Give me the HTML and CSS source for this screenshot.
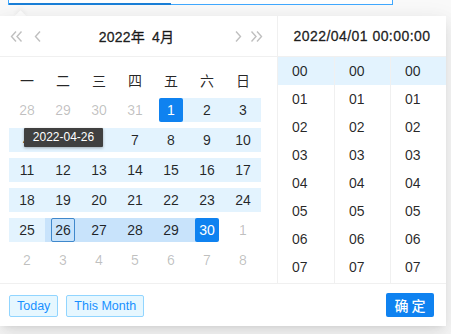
FILE: index.html
```html
<!DOCTYPE html>
<html lang="zh">
<head>
<meta charset="utf-8">
<title>Date picker</title>
<link rel="stylesheet" href="styles.css">
</head>
<body>
<div class="input-bar"><span class="active-bar"></span></div>
<div class="dropdown">
  <span class="arrow"></span>
  <div class="panel">
    <div class="panel-main">
      <div class="date-panel">
        <div class="date-header">
          <div class="nav nav-left">
            <svg class="dbl" width="13" height="13" viewBox="0 0 13 13"><polyline points="6,1.5 1.5,6.5 6,11.5"/><polyline points="11.5,1.5 7,6.5 11.5,11.5"/></svg>
            <svg class="sgl" width="7" height="13" viewBox="0 0 7 13"><polyline points="6,1.5 1.5,6.5 6,11.5"/></svg>
          </div>
          <div class="title"><span class="year">2022年</span><span>4月</span></div>
          <div class="nav nav-right">
            <svg class="sgl" width="7" height="13" viewBox="0 0 7 13"><polyline points="1,1.5 5.5,6.5 1,11.5"/></svg>
            <svg class="dbl" width="13" height="13" viewBox="0 0 13 13"><polyline points="1.5,1.5 6,6.5 1.5,11.5"/><polyline points="7,1.5 11.5,6.5 7,11.5"/></svg>
          </div>
        </div>
        <div class="date-body">
          <div class="row week"><div class="cell">一</div><div class="cell">二</div><div class="cell">三</div><div class="cell">四</div><div class="cell">五</div><div class="cell">六</div><div class="cell">日</div></div>
          <div class="row">
            <div class="cell out"><span class="num">28</span></div>
            <div class="cell out"><span class="num">29</span></div>
            <div class="cell out"><span class="num">30</span></div>
            <div class="cell out"><span class="num">31</span></div>
            <div class="cell range-start"><span class="num">1</span></div>
            <div class="cell in-range"><span class="num">2</span></div>
            <div class="cell in-range"><span class="num">3</span></div>
          </div>
          <div class="row">
            <div class="cell in-range"><span class="num">4</span></div>
            <div class="cell in-range"><span class="num">5</span></div>
            <div class="cell in-range"><span class="num">6</span></div>
            <div class="cell in-range"><span class="num">7</span></div>
            <div class="cell in-range"><span class="num">8</span></div>
            <div class="cell in-range"><span class="num">9</span></div>
            <div class="cell in-range"><span class="num">10</span></div>
          </div>
          <div class="row">
            <div class="cell in-range"><span class="num">11</span></div>
            <div class="cell in-range"><span class="num">12</span></div>
            <div class="cell in-range"><span class="num">13</span></div>
            <div class="cell in-range"><span class="num">14</span></div>
            <div class="cell in-range"><span class="num">15</span></div>
            <div class="cell in-range"><span class="num">16</span></div>
            <div class="cell in-range"><span class="num">17</span></div>
          </div>
          <div class="row">
            <div class="cell in-range"><span class="num">18</span></div>
            <div class="cell in-range"><span class="num">19</span></div>
            <div class="cell in-range"><span class="num">20</span></div>
            <div class="cell in-range"><span class="num">21</span></div>
            <div class="cell in-range"><span class="num">22</span></div>
            <div class="cell in-range"><span class="num">23</span></div>
            <div class="cell in-range"><span class="num">24</span></div>
          </div>
          <div class="row">
            <div class="cell in-range"><span class="num">25</span></div>
            <div class="cell hover-range hovered"><span class="num">26</span></div>
            <div class="cell hover-range"><span class="num">27</span></div>
            <div class="cell hover-range"><span class="num">28</span></div>
            <div class="cell hover-range"><span class="num">29</span></div>
            <div class="cell range-end"><span class="num">30</span></div>
            <div class="cell out"><span class="num">1</span></div>
          </div>
          <div class="row">
            <div class="cell out"><span class="num">2</span></div>
            <div class="cell out"><span class="num">3</span></div>
            <div class="cell out"><span class="num">4</span></div>
            <div class="cell out"><span class="num">5</span></div>
            <div class="cell out"><span class="num">6</span></div>
            <div class="cell out"><span class="num">7</span></div>
            <div class="cell out"><span class="num">8</span></div>
          </div>
          <div class="tooltip">2022-04-26</div>
        </div>
      </div>
      <div class="time-panel">
        <div class="time-header">2022/04/01 00:00:00</div>
        <div class="time-body">
          <ul class="col">
            <li class="sel">00</li><li>01</li><li>02</li><li>03</li><li>04</li><li>05</li><li>06</li><li>07</li>
          </ul>
          <ul class="col">
            <li class="sel">00</li><li>01</li><li>02</li><li>03</li><li>04</li><li>05</li><li>06</li><li>07</li>
          </ul>
          <ul class="col">
            <li class="sel">00</li><li>01</li><li>02</li><li>03</li><li>04</li><li>05</li><li>06</li><li>07</li>
          </ul>
        </div>
      </div>
    </div>
    <div class="footer">
      <div class="presets">
        <span class="tag">Today</span>
        <span class="tag">This Month</span>
      </div>
      <button class="ok">确 定</button>
    </div>
  </div>
</div>
</body>
</html>
```

FILE: styles.css
```css
* { box-sizing: border-box; }
html, body { margin: 0; padding: 0; }
body {
  width: 451px;
  height: 334px;
  overflow: hidden;
  background: #fafafa;
  font-family: "Liberation Sans", "Noto Sans CJK SC", sans-serif;
  font-size: 14px;
  color: rgba(0, 0, 0, 0.85);
  position: relative;
}
.input-bar {
  margin-left: 8px;
  width: 385px;
  height: 5px;
  border: 1px solid #40a9ff;
  border-top: 0;
  background: #fff;
  position: relative;
}
.active-bar {
  position: absolute;
  left: 0;
  bottom: -1px;
  width: 162px;
  height: 2px;
  background: #1a7fd8;
}
.dropdown {
  margin-top: 11px;
  width: 446px;
  position: relative;
}
.arrow {
  position: absolute;
  left: 16px;
  top: -4px;
  width: 9px;
  height: 9px;
  background: #fff;
  transform: rotate(45deg);
  box-shadow: -2px -2px 4px rgba(0, 0, 0, 0.04);
}
.panel {
  position: relative;
  background: #fff;
  box-shadow: 0 3px 6px -4px rgba(0,0,0,.12), 0 6px 16px 0 rgba(0,0,0,.08), 0 9px 28px 8px rgba(0,0,0,.05);
}
.panel-main {
  display: flex;
  height: 268px;
  border-bottom: 1px solid #f0f0f0;
}
.date-panel {
  width: 278px;
  border-right: 1px solid #f0f0f0;
}
.date-header {
  height: 41px;
  border-bottom: 1px solid #f0f0f0;
  display: flex;
  align-items: center;
  padding: 0 14px 0 10px;
}
.nav {
  display: flex;
  align-items: center;
  gap: 11px;
  width: 31px;
}
.nav-right { justify-content: flex-end; gap: 8px; }
.nav svg {
  fill: none;
  stroke: rgba(0, 0, 0, 0.25);
  stroke-width: 1.4;
  display: block;
}
.title {
  flex: 1;
  text-align: center;
  font-weight: 400;
  -webkit-text-stroke: 0.35px rgba(0, 0, 0, 0.85);
  font-size: 14px;
  letter-spacing: 0.2px;
}
.year { margin-right: 7px; }
.date-body {
  position: relative;
  padding: 8px 0 0 9px;
}
.row {
  display: flex;
  height: 30px;
  align-items: center;
}
.cell {
  width: 36px;
  height: 24px;
  line-height: 24px;
  text-align: center;
}
.week .cell { font-family: "Noto Sans CJK SC", sans-serif; line-height: 24px; }
.num {
  display: inline-block;
  width: 24px;
  height: 24px;
  line-height: 24px;
  border-radius: 2px;
}
.out { color: rgba(0, 0, 0, 0.25); }
.in-range { background: #e3f3fe; }
.range-start { background: linear-gradient(90deg, transparent 50%, #e3f3fe 50%); }
.range-start .num, .range-end .num { background: #0f82f0; color: #fff; }
.hover-range { background: #c8e3fb; }
.range-end { background: linear-gradient(90deg, #c8e3fb 50%, transparent 50%); }
.hovered .num { border: 1px solid #3f88cc; line-height: 22px; }
.tooltip {
  position: absolute;
  left: 24px;
  top: 71px;
  width: 79px;
  height: 19px;
  line-height: 19px;
  text-align: center;
  background: #404040;
  color: #fff;
  font-size: 12px;
  border-radius: 1px;
  box-shadow: 0 1px 3px rgba(0, 0, 0, 0.3);
}
.time-panel {
  width: 168px;
  display: flex;
  flex-direction: column;
}
.time-header {
  height: 41px;
  border-bottom: 1px solid #f0f0f0;
  line-height: 40px;
  text-align: center;
  font-weight: 400;
  -webkit-text-stroke: 0.35px rgba(0, 0, 0, 0.85);
  letter-spacing: 0.45px;
}
.time-body {
  display: flex;
  flex: 1;
  overflow: hidden;
}
.col {
  list-style: none;
  margin: 0;
  padding: 0;
  width: 56px;
}
.col + .col { border-left: 1px solid #f0f0f0; }
.col li {
  height: 28px;
  line-height: 28px;
  padding-left: 14px;
}
.col li.sel { background: #e3f3fe; }
.footer {
  height: 42px;
  display: flex;
  align-items: center;
  justify-content: space-between;
  padding: 0 12px 0 9px;
}
.presets { display: flex; gap: 8px; margin-top: 2px; }
.tag {
  display: inline-block;
  height: 22px;
  line-height: 20px;
  padding: 0 7px;
  border: 1px solid #91d5ff;
  background: #e6f7ff;
  color: #1890ff;
  font-size: 12.5px;
  border-radius: 2px;
}
.ok {
  width: 48px;
  height: 24px;
  border: 0;
  border-radius: 2px;
  background: #0f82f0;
  color: #fff;
  font-family: "Noto Sans CJK SC", sans-serif;
  font-size: 14px;
  font-weight: 500;
  padding: 0;
  line-height: 24px;
}
```
